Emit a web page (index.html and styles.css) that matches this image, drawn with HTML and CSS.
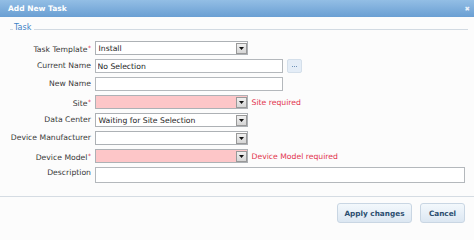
FILE: index.html
```html
<!DOCTYPE html>
<html lang="en">
<head>
<meta charset="utf-8">
<title>Add New Task</title>
<link rel="stylesheet" href="styles.css">
</head>
<body>
<div class="dialog">
  <div class="header">
    <span class="title">Add New Task</span>
    <span class="close">&#x2716;</span>
  </div>
  <div class="section-title"><span class="section-text">Task</span></div>
  <div class="form">
    <label class="lbl">Task Template<span class="req">*</span></label>
    <div class="ctl">
      <div class="combo"><span class="combo-text">Install</span><span class="combo-btn"><svg width="5" height="3" viewBox="0 0 5 3"><path d="M0 0H5L2.5 3Z" fill="#111"/></svg></span></div>
    </div>

    <label class="lbl">Current Name</label>
    <div class="ctl">
      <input class="input" type="text" value="No Selection">
      <span class="dots"><i class="dot"></i><i class="dot"></i><i class="dot"></i></span>
    </div>

    <label class="lbl">New Name</label>
    <div class="ctl">
      <input class="input" type="text" value="">
    </div>

    <label class="lbl">Site<span class="req">*</span></label>
    <div class="ctl">
      <div class="combo combo-err"><span class="combo-text"></span><span class="combo-btn"><svg width="5" height="3" viewBox="0 0 5 3"><path d="M0 0H5L2.5 3Z" fill="#111"/></svg></span></div>
      <span class="err-text">Site required</span>
    </div>

    <label class="lbl">Data Center</label>
    <div class="ctl">
      <div class="combo"><span class="combo-text">Waiting for Site Selection</span><span class="combo-btn"><svg width="5" height="3" viewBox="0 0 5 3"><path d="M0 0H5L2.5 3Z" fill="#111"/></svg></span></div>
    </div>

    <label class="lbl">Device Manufacturer</label>
    <div class="ctl">
      <div class="combo"><span class="combo-text"></span><span class="combo-btn"><svg width="5" height="3" viewBox="0 0 5 3"><path d="M0 0H5L2.5 3Z" fill="#111"/></svg></span></div>
    </div>

    <label class="lbl">Device Model<span class="req">*</span></label>
    <div class="ctl">
      <div class="combo combo-err"><span class="combo-text"></span><span class="combo-btn"><svg width="5" height="3" viewBox="0 0 5 3"><path d="M0 0H5L2.5 3Z" fill="#111"/></svg></span></div>
      <span class="err-text">Device Model required</span>
    </div>

    <label class="lbl lbl-top">Description</label>
    <div class="ctl ctl-desc">
      <input class="input input-desc" type="text" value="">
    </div>
  </div>
  <div class="footer">
    <button class="btn" type="button">Apply changes</button>
    <button class="btn btn-cancel" type="button">Cancel</button>
  </div>
</div>
</body>
</html>
```

FILE: styles.css
```css
* {
  box-sizing: border-box;
}

html, body {
  margin: 0;
  padding: 0;
}

body {
  background: #fcfcfc;
  font-family: "DejaVu Sans", Verdana, sans-serif;
  font-size: 7.7px;
  color: #3c3c3c;
}

.dialog {
  width: 474px;
  height: 227px;
  display: flex;
  flex-direction: column;
  overflow: hidden;
}

.header {
  flex: none;
  height: 17px;
  background: linear-gradient(#93bee5, #6a9fd3);
  display: flex;
  align-items: center;
  justify-content: space-between;
  padding: 0 4px 0 8px;
}

.title {
  color: #ffffff;
  font-weight: bold;
  font-size: 7.5px;
}

.close {
  color: #eaf2fa;
  font-size: 6.5px;
}

.section-title {
  flex: none;
  display: flex;
  align-items: center;
  height: 12px;
  margin-top: 6px;
  padding: 0 6px 0 10px;
  color: #3f83c6;
  font-size: 8px;
}

.section-title::before {
  content: "";
  width: 3px;
  border-top: 1px solid #d2dae2;
  margin-right: 1px;
}

.section-title::after {
  content: "";
  flex: 1;
  border-top: 1px solid #d2dae2;
  margin-left: 3px;
}

.section-text {
  margin-bottom: 2.5px;
}

.form {
  flex: none;
  display: grid;
  grid-template-columns: 91px 1fr;
  grid-auto-rows: 14px;
  column-gap: 3.5px;
  row-gap: 4px;
  margin-top: 6px;
}

.lbl {
  text-align: right;
  white-space: nowrap;
  line-height: 14px;
  color: #383838;
}

.lbl-top {
  line-height: 12px;
}

.req {
  color: #e2334d;
  font-size: 6px;
  vertical-align: 2px;
  margin-left: 0.5px;
}

.ctl {
  display: flex;
  align-items: center;
}

.ctl-desc {
  height: 16px;
}

.combo {
  width: 153.5px;
  height: 14px;
  border: 1px solid #adb1b5;
  background: #ffffff;
  display: flex;
  align-items: center;
  padding-left: 3px;
}

.combo-err {
  background: #fdc6c8;
}

.combo-text {
  flex: 1;
  color: #1e1e1e;
  white-space: nowrap;
}

.combo-btn {
  width: 11px;
  height: 11px;
  margin-right: 0.5px;
  background: linear-gradient(#f0f0f0, #d6d6d6);
  border: 1px solid #999999;
  display: flex;
  align-items: center;
  justify-content: center;
}

.combo-btn svg {
  display: block;
}

.input {
  width: 188px;
  height: 14px;
  margin: 0;
  border: 1px solid #b4b8bc;
  background: #ffffff;
  padding: 0 2px;
  font-family: inherit;
  font-size: inherit;
  color: #1e1e1e;
  outline: none;
}

.input-desc {
  width: 370px;
  height: 16px;
}

.dots {
  width: 15px;
  height: 14px;
  margin-left: 4.5px;
  border: 1px solid #d4dfea;
  border-radius: 2px;
  background: #e4edf7;
  display: flex;
  align-items: center;
  justify-content: center;
  gap: 1px;
  padding-top: 1px;
}

.dot {
  width: 1.2px;
  height: 1.2px;
  background: #6f92b8;
}

.err-text {
  color: #e2334d;
  margin-left: 3.5px;
  white-space: nowrap;
}

.footer {
  margin-top: auto;
  flex: none;
  height: 31px;
  border-top: 1px solid #d5dce3;
  display: flex;
  justify-content: flex-end;
  align-items: flex-start;
  gap: 8px;
  padding: 6px 9px 0 0;
}

.btn {
  height: 20px;
  margin: 0;
  padding: 0 6.5px;
  border: 1px solid #c9d6e3;
  border-radius: 3px;
  background: linear-gradient(#f3f8fc, #dce7f2);
  color: #2c4e70;
  font-family: "DejaVu Sans", Verdana, sans-serif;
  font-weight: bold;
  font-size: 7.3px;
}

.btn-cancel {
  min-width: 45px;
}
```
